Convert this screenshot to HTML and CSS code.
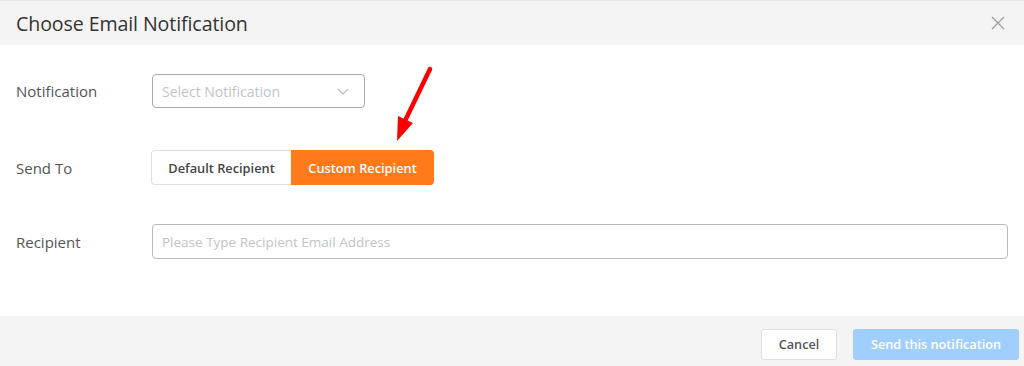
FILE: index.html
```html
<!DOCTYPE html>
<html>
<head>
<meta charset="utf-8">
<link rel="stylesheet" href="styles.css">
</head>
<body>
<div class="dialog">
  <div class="header">
    <div class="title">Choose Email Notification</div>
    <svg class="close" width="14" height="14" viewBox="0 0 14 14"><path d="M1 1L13 13M13 1L1 13" stroke="#a0a0a0" stroke-width="1.4" fill="none"/></svg>
  </div>
  <div class="body">
    <div class="row r1">
      <div class="label">Notification</div>
      <div class="select">
        <span class="ph">Select Notification</span>
        <svg class="chev" width="12" height="7" viewBox="0 0 12 7"><path d="M1 1L6 6L11 1" stroke="#b8bcc4" stroke-width="1.2" fill="none"/></svg>
      </div>
    </div>
    <div class="row r2">
      <div class="label">Send To</div>
      <div class="toggle">
        <div class="opt">Default Recipient</div>
        <div class="opt active">Custom Recipient</div>
      </div>
    </div>
    <div class="row r3">
      <div class="label">Recipient</div>
      <div class="input"><span class="ph">Please Type Recipient Email Address</span></div>
    </div>
    <svg class="arrow" width="60" height="90" viewBox="0 0 60 90">
      <path d="M49 8L23 62" stroke="#ff0000" stroke-width="4.5" stroke-linecap="round" fill="none"/>
      <path d="M16 80L17 55L32 62Z" fill="#ff0000"/>
    </svg>
  </div>
  <div class="footer">
    <div class="btn cancel">Cancel</div>
    <div class="btn send">Send this notification</div>
  </div>
</div>
</body>
</html>
```
FILE: styles.css
```css
html, body { margin: 0; padding: 0; }
body {
  width: 1024px; height: 366px; overflow: hidden; background: #fff;
  font-family: "Open Sans", "Noto Sans", sans-serif;
}
.dialog { display: flex; flex-direction: column; height: 366px; border-top: 1px solid #e6e6e6; box-sizing: border-box; }
.header {
  height: 44px; background: #f4f4f4; display: flex; align-items: center;
  justify-content: space-between; padding: 0 19px 0 16px;
}
.title { font-size: 19.6px; color: #333; letter-spacing: -0.1px; }
.close { display: block; }
.body { flex: 1; position: relative; padding: 0 16px; }
.row { display: flex; align-items: center; }
.r1 { margin-top: 29px; }
.r2 { margin-top: 42px; }
.r3 { margin-top: 39px; }
.label { width: 136px; font-size: 15px; color: #555; }
.ph { color: #c0c4cc; font-size: 14px; }
.select {
  width: 213px; height: 34px; box-sizing: border-box; border: 1px solid #a9abb0;
  border-radius: 4px; display: flex; align-items: center; justify-content: space-between;
  padding: 0 15px 0 9px;
}
.toggle { display: flex; height: 35px; margin-left: -1px; }
.opt {
  display: flex; align-items: center; justify-content: center; font-size: 12.8px;
  font-weight: 600; color: #444; box-sizing: border-box;
}
.opt:first-child { width: 140px; border: 1px solid #dcdfe6; border-right: none; border-radius: 4px 0 0 4px; }
.opt.active { width: 143px; background: #ff7a1a; color: #fff; border-radius: 0 4px 4px 0; }
.input {
  flex: 1; height: 35px; box-sizing: border-box; border: 1px solid #b9bbc0; border-radius: 4px;
  display: flex; align-items: center; padding: 0 9px;
}
.input .ph { font-size: 13.5px; }
.arrow { position: absolute; left: 381px; top: 16px; }
.footer {
  height: 50px; background: #f4f4f4; display: flex; align-items: center;
  justify-content: flex-end; padding: 0 5px 0 0; gap: 16px;
}
.btn {
  height: 31px; box-sizing: border-box; border-radius: 3px; display: flex;
  align-items: center; justify-content: center; font-size: 12.7px; font-weight: 600;
  margin-top: 6px;
}
.cancel { width: 76px; background: #fff; border: 1px solid #dcdfe6; color: #555; }
.send { width: 166px; background: #a0cfff; color: #fff; }
```
